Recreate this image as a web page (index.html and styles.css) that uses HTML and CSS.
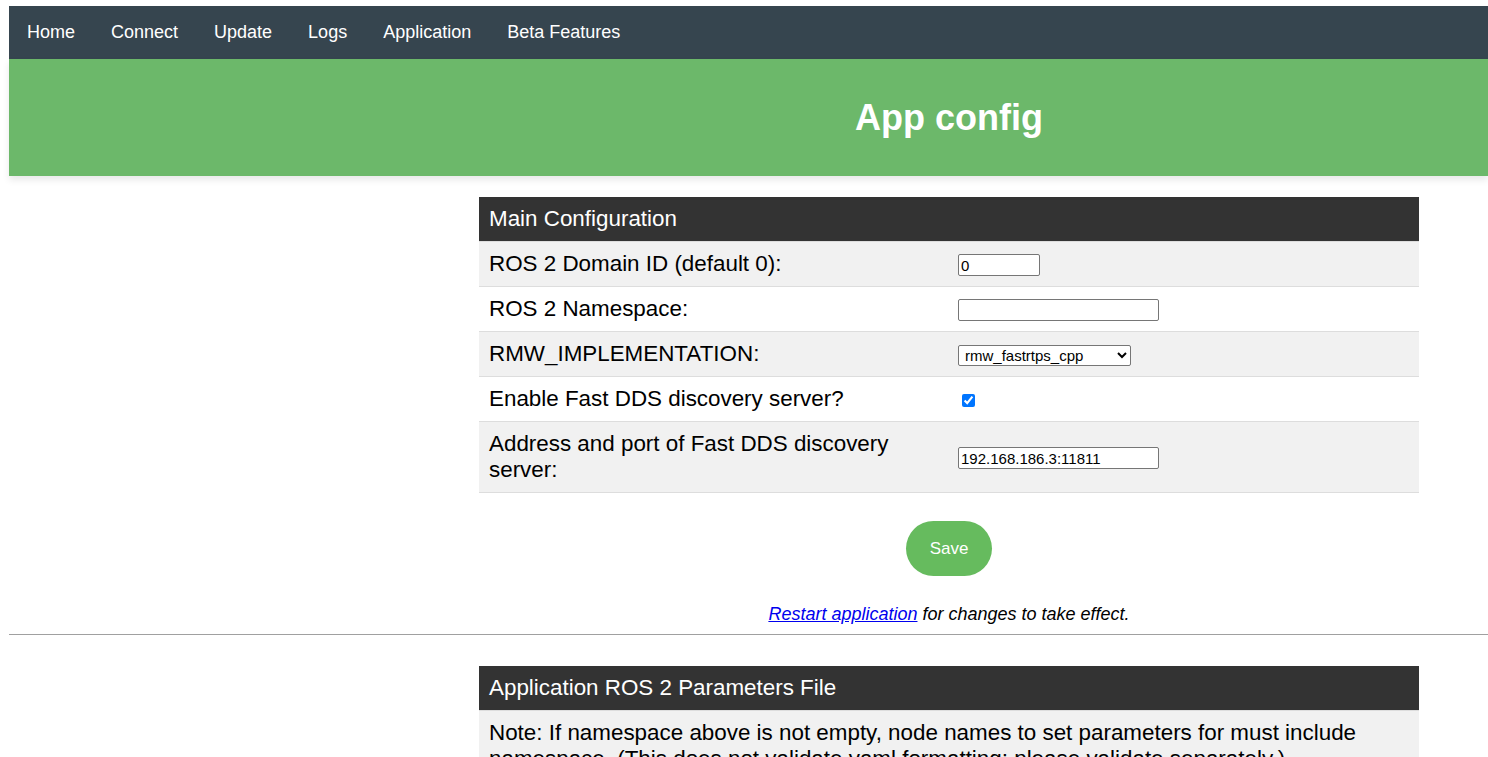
FILE: index.html
```html
<!DOCTYPE html>
<html>
<head>
<meta charset="utf-8">
<link rel="stylesheet" href="styles.css">
</head>
<body>
<div class="page">
  <nav class="topnav">
    <a href="#">Home</a>
    <a href="#">Connect</a>
    <a href="#">Update</a>
    <a href="#">Logs</a>
    <a href="#">Application</a>
    <a href="#">Beta Features</a>
  </nav>
  <header class="banner">
    <div class="column">
      <h1>App config</h1>
    </div>
  </header>
  <main>
    <div class="column">
      <table class="cfg">
        <colgroup><col class="c-label"><col class="c-value"></colgroup>
        <thead>
          <tr><th colspan="2">Main Configuration</th></tr>
        </thead>
        <tbody>
          <tr>
            <td>ROS 2 Domain ID (default 0):</td>
            <td><input class="in-short" type="text" value="0"></td>
          </tr>
          <tr>
            <td>ROS 2 Namespace:</td>
            <td><input class="in-long" type="text" value=""></td>
          </tr>
          <tr>
            <td>RMW_IMPLEMENTATION:</td>
            <td><select class="sel"><option>rmw_fastrtps_cpp</option><option>rmw_cyclonedds_cpp</option></select></td>
          </tr>
          <tr>
            <td>Enable Fast DDS discovery server?</td>
            <td><input class="chk" type="checkbox" checked></td>
          </tr>
          <tr>
            <td>Address and port of Fast DDS discovery server:</td>
            <td><input class="in-long" type="text" value="192.168.186.3:11811"></td>
          </tr>
        </tbody>
      </table>
      <div class="actions">
        <button class="save">Save</button>
      </div>
      <p class="note"><a href="#">Restart application</a> for changes to take effect.</p>
    </div>
    <hr class="divider">
    <div class="column">
      <table class="cfg">
        <thead>
          <tr><th>Application ROS 2 Parameters File</th></tr>
        </thead>
        <tbody>
          <tr>
            <td>Note: If namespace above is not empty, node names to set parameters for must include namespace. (This does not validate yaml formatting; please validate separately.)</td>
          </tr>
        </tbody>
      </table>
    </div>
  </main>
</div>
</body>
</html>
```
FILE: styles.css
```css
html, body {
  margin: 0;
  padding: 0;
  background: #fff;
  font-family: "Liberation Sans", Arial, sans-serif;
  color: #000;
}

.page {
  padding: 6px 0 0 9px;
}

.topnav {
  display: flex;
  background: #36454f;
  height: 53px;
  align-items: center;
}

.topnav a {
  color: #fff;
  text-decoration: none;
  font-size: 18px;
  padding: 0 18px;
  line-height: 53px;
}

.banner {
  background: #6cb86a;
  box-shadow: 0 4px 7px rgba(0, 0, 0, 0.09);
  position: relative;
}

.column {
  margin-left: 470px;
  width: 940px;
}

.banner h1 {
  margin: 0;
  padding: 38px 0;
  text-align: center;
  color: #fff;
  font-size: 36px;
  font-weight: bold;
  line-height: 41px;
}

main {
  padding-top: 21px;
}

.cfg {
  width: 940px;
  border-collapse: collapse;
  table-layout: fixed;
}

.c-label {
  width: 469px;
}

.c-value {
  width: 471px;
}

.cfg th {
  background: #333;
  color: #fff;
  font-weight: normal;
  text-align: left;
  font-size: 22.4px;
  line-height: 26px;
  padding: 9px 10px;
  border-bottom: 1px solid #ddd;
}

.cfg td {
  font-size: 22.4px;
  line-height: 26px;
  padding: 9px 10px;
  border-bottom: 1px solid #ddd;
  vertical-align: middle;
}

.cfg tbody tr:nth-child(odd) td {
  background: #f1f1f1;
}

.cfg tbody tr:nth-child(even) td {
  background: #fff;
}

.cfg input[type="text"] {
  font-family: "Liberation Sans", Arial, sans-serif;
  font-size: 15px;
  height: 22px;
  box-sizing: border-box;
  padding: 1px 2px;
  border: 1px solid #767676;
  border-radius: 2px;
  margin: 0;
  vertical-align: middle;
}

.in-short {
  width: 82px;
}

.in-long {
  width: 201px;
}

.sel {
  font-family: "Liberation Sans", Arial, sans-serif;
  font-size: 15px;
  width: 173px;
  height: 21px;
  padding: 0 0 0 2px;
  margin: 0;
  border: 1px solid #767676;
  border-radius: 2px;
  background: #fff;
  vertical-align: middle;
}

.chk {
  width: 13px;
  height: 13px;
  margin: 3px 3px 3px 4px;
  vertical-align: middle;
}

.actions {
  display: flex;
  justify-content: center;
  padding-top: 28px;
}

.save {
  background: #66bb5e;
  color: #fff;
  border: none;
  border-radius: 28px;
  font-family: "Liberation Sans", Arial, sans-serif;
  font-size: 17px;
  line-height: 19px;
  padding: 18px 24px;
}

.note {
  text-align: center;
  font-style: italic;
  font-size: 18px;
  line-height: 21px;
  margin: 28px 0 0 0;
}

.note a {
  color: #0000ee;
  text-decoration: underline;
}

.divider {
  border: none;
  border-top: 1px solid #a0a0a0;
  margin: 9px 0 31px 0;
  height: 0;
}
```
